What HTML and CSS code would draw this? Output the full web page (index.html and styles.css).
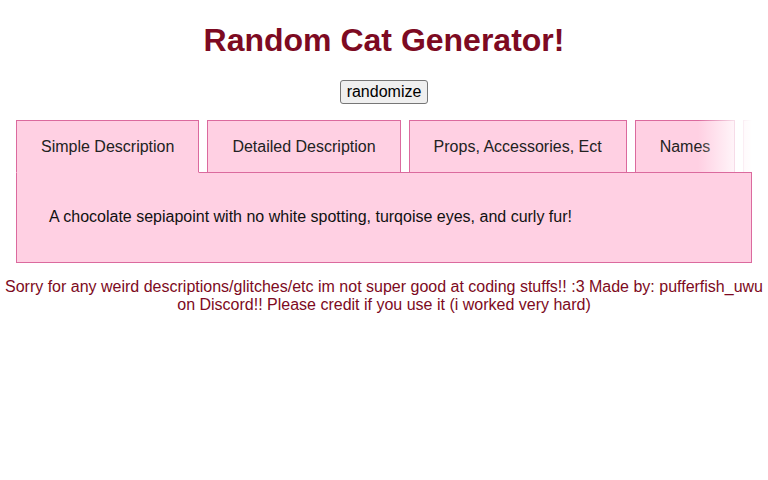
FILE: index.html
```html
<!DOCTYPE html>
<html>
<head>
<meta charset="utf-8">
<link rel="stylesheet" href="styles.css">
</head>
<body>
<h1 class="title">Random Cat Generator!</h1>
<div class="actions"><button class="rand-btn">randomize</button></div>
<div class="tabs-wrap">
  <div class="tabs">
    <div class="tab active">Simple Description</div>
    <div class="tab">Detailed Description</div>
    <div class="tab">Props, Accessories, Ect</div>
    <div class="tab">Names</div>
    <div class="tab">Extras</div>
  </div>
  <div class="panel">A chocolate sepiapoint with no white spotting, turqoise eyes, and curly fur!</div>
</div>
<p class="footer">Sorry for any weird descriptions/glitches/etc im not super good at coding stuffs!! :3 Made by: pufferfish_uwu on Discord!! Please credit if you use it (i worked very hard)</p>
</body>
</html>
```

FILE: styles.css
```css
html, body {
  margin: 0;
  padding: 0;
  background: #fff;
  font-family: "Liberation Sans", Arial, sans-serif;
}
.title {
  margin: 22px 0 21px;
  font-size: 32px;
  font-weight: bold;
  line-height: 37px;
  text-align: center;
  color: #7d0a22;
}
.actions {
  display: flex;
  justify-content: center;
}
.rand-btn {
  font-family: "Liberation Sans", Arial, sans-serif;
  font-size: 16px;
  line-height: 18px;
  padding: 1px 6px;
  height: 24px;
  color: #000;
  background: #efefef;
  border: 1px solid #767676;
  border-radius: 3px;
}
.tabs-wrap {
  margin: 16px 16px 0;
}
.tabs {
  position: relative;
  display: flex;
  gap: 8px;
  overflow: hidden;
  margin-bottom: -1px;
}
.tabs::after {
  content: "";
  position: absolute;
  right: 0;
  top: 0;
  bottom: 1px;
  width: 54px;
  z-index: 2;
  background: linear-gradient(to right, rgba(255,255,255,0), rgba(255,255,255,0.75) 65%, #fff);
}
.tab {
  flex-shrink: 0;
  padding: 16px 24px;
  line-height: 19px;
  font-size: 16px;
  color: #222;
  background: #ffd0e3;
  border: 1px solid #db6a9e;
  position: relative;
  z-index: 1;
}
.tab.active {
  border-bottom-color: #ffd0e3;
}
.panel {
  position: relative;
  padding: 35px 32px 36px;
  line-height: 18px;
  font-size: 16px;
  color: #111;
  background: #ffd0e3;
  border: 1px solid #db6a9e;
}
.footer {
  margin: 15px 0 0;
  text-align: center;
  font-size: 16px;
  line-height: 18px;
  color: #7d0a22;
}
```
